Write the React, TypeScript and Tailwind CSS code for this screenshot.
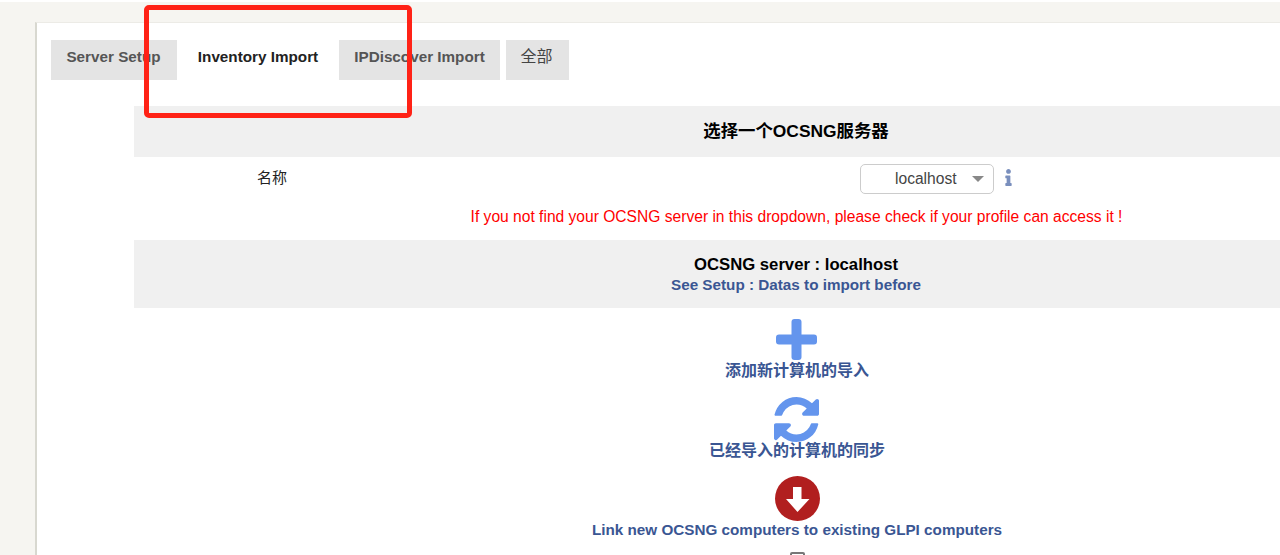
import React from 'react';
import { FaInfo } from 'react-icons/fa';

const tabs = [
  { label: 'Server Setup', className: 'w-[126px] pr-[1px] bg-[#e4e4e4] text-[#555555] font-bold text-[15.25px]' },
  { label: 'Inventory Import', className: 'w-[150px] text-[#222222] font-bold text-[15.25px]' },
  { label: 'IPDiscover Import', className: 'w-[161px] bg-[#e4e4e4] text-[#555555] font-bold text-[15.25px]' },
  { label: '全部', className: 'w-[63px] pr-[2px] bg-[#e4e4e4] text-[#444444] text-[16px]' },
];

const FONT = "font-['Liberation_Sans','Noto_Sans_CJK_SC',sans-serif]";

const PlusIcon = () => (
  <svg width="41" height="41" viewBox="0 0 41 41" className="fill-[#6495ed]">
    <rect x="15.5" y="0" width="10" height="41" rx="3" />
    <rect x="0" y="15.5" width="41" height="10" rx="3" />
  </svg>
);

// fa-refresh
const RefreshIcon = () => (
  <svg width="45" height="45" viewBox="128 128 1536 1536" className="fill-[#6495ed]">
    <path d="M1639 1056q0 5-1 7-64 268-268 434.5t-478 166.5q-146 0-282.5-55t-243.5-157l-129 129q-19 19-45 19t-45-19-19-45v-448q0-26 19-45t45-19h448q26 0 45 19t19 45-19 45l-137 137q71 66 161 102t187 36q134 0 250-65t186-179q11-17 53-117 8-23 30-23h192q13 0 22.5 9.5t9.5 22.5zm25-800v448q0 26-19 45t-45 19h-448q-26 0-45-19t-19-45 19-45l138-138q-148-137-349-137-134 0-250 65t-186 179q-11 17-53 117-8 23-30 23h-199q-13 0-22.5-9.5t-9.5-22.5v-7q65-268 270-434.5t480-166.5q146 0 284 55.5t245 156.5l130-129q19-19 45-19t45 19 19 45z" />
  </svg>
);

const DownIcon = () => (
  <svg width="45" height="45" viewBox="0 0 45 45">
    <circle cx="22.5" cy="22.5" r="22.5" fill="#b11f1f" />
    <path d="M18 11h8.5v12h8L22.5 36 11 23h7z" fill="#ffffff" />
  </svg>
);

const ActionLink: React.FC<{ icon: React.ReactNode; label: string; labelClass: string; className?: string }> = ({ icon, label, labelClass, className }) => (
  <div className={`flex flex-col items-center ${className ?? ''}`}>
    <div className="flex h-[45px] items-center justify-center">{icon}</div>
    <span className={`leading-[18px] ${labelClass}`}>{label}</span>
  </div>
);

export default function App() {
  return (
    <div className={`relative h-[555px] w-[1280px] overflow-hidden bg-[#f6f5f1] pl-[35px] pt-[22px] ${FONT}`}>
      <div className="absolute top-0 left-0 h-[2px] w-full bg-white" />
      <div className="h-[540px] w-[1245px] overflow-hidden border-l-2 border-t border-l-[#d8d8d0] border-t-[#ecebe6] bg-white pl-[14px] pt-[17px]">
        <ul className="flex h-[40px] gap-[6px]">
          {tabs.map(tab => (
            <li key={tab.label} className={`${tab.className} h-[40px] pt-[8px] text-center leading-[18px]`}>
              {tab.label}
            </li>
          ))}
        </ul>

        <div className="ml-[83px] mt-[26px] w-[1324px]">
          <div className="flex h-[51px] items-center justify-center bg-[#f0f0f0] text-[17.4px] font-bold text-black">
            选择一个OCSNG服务器
          </div>

          <div className="h-[83px]">
            <div className="flex h-[44px] items-center">
              <div className="w-[276px] pb-[2px] text-center text-[15px] text-[#222222]">名称</div>
              <div className="ml-[450px] flex h-[30px] w-[134px] items-center rounded-[5px] border border-[#cccccc] bg-white pl-[34px]">
                <span className="text-[15.6px] text-[#444444]">localhost</span>
                <span className="ml-[15px] h-0 w-0 border-x-[6px] border-t-[6px] border-x-transparent border-t-[#888888]" />
              </div>
              <FaInfo className="mb-[4px] ml-[6px] text-[17px] text-[#7a8fbd]" />
            </div>
            <p className="mt-[7px] pl-[1px] text-center text-[15.6px] leading-[18px] text-[#ff0000]">
              If you not find your OCSNG server in this dropdown, please check if your profile can access it !
            </p>
          </div>

          <div className="flex h-[68px] flex-col items-center justify-center bg-[#f0f0f0] pt-[2px]">
            <span className="text-[16.7px] leading-[20px] font-bold text-black">OCSNG server : localhost</span>
            <span className="text-[15.25px] leading-[20px] font-bold text-[#3a5693]">See Setup : Datas to import before</span>
          </div>

          <div className="flex flex-col items-center pt-[9px] pl-[2px] font-bold whitespace-nowrap text-[#3a5693]">
            <ActionLink icon={<PlusIcon />} label="添加新计算机的导入" labelClass="text-[16px]" />
            <ActionLink icon={<RefreshIcon />} label="已经导入的计算机的同步" labelClass="text-[16px]" className="mt-[17px]" />
            <ActionLink icon={<DownIcon />} label="Link new OCSNG computers to existing GLPI computers" labelClass="text-[15.25px]" className="mt-[16px]" />
            <div className="mt-[13px] h-[10px] w-[15px] rounded-[2px] border-2 border-[#777777]" />
          </div>
        </div>
      </div>

      <div className="absolute left-[144px] top-[5px] h-[113px] w-[268px] rounded-[5px] border-[5px] border-[#ff2216]" />
    </div>
  );
}
